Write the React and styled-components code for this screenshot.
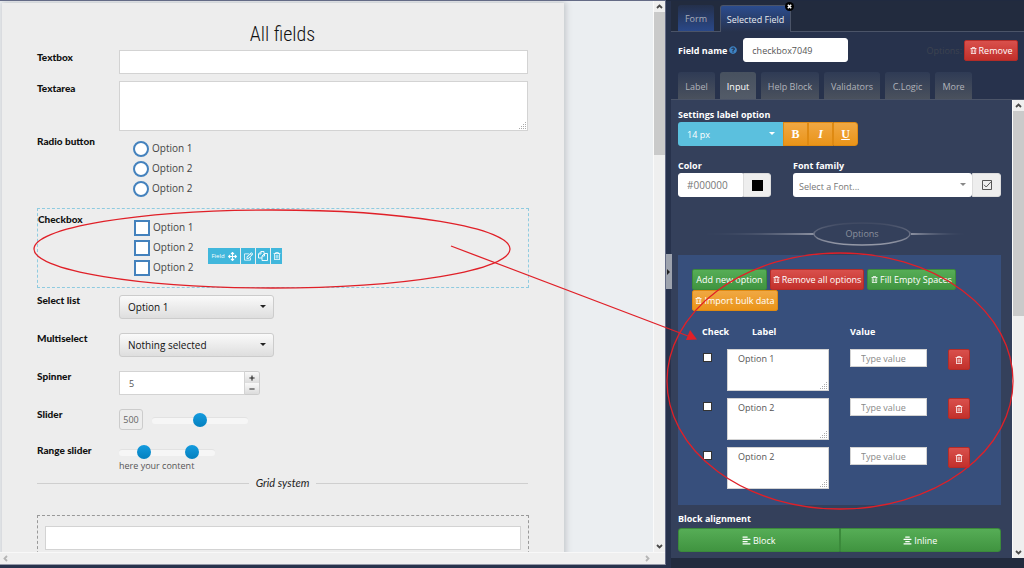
import React from "react";
import styled, { createGlobalStyle, css } from "styled-components";
import {
  FaArrowsAlt,
  FaRegEdit,
  FaRegTrashAlt,
  FaQuestionCircle,
  FaAlignLeft,
  FaAlignCenter,
  FaPlus,
  FaMinus,
} from "react-icons/fa";

const GlobalStyle = createGlobalStyle`
  *, *::before, *::after { box-sizing: border-box; }
  html, body { margin: 0; background: #27324c; }
  body, button, input, select, textarea {
    font-family: "Open Sans", "Noto Sans", sans-serif;
    font-size: 9px;
  }
  button, input, select, textarea { margin: 0; }
`;

/* ---------- shell ---------- */

const Shell = styled.div`
  position: relative;
  display: flex;
  height: 100vh;
  min-height: 568px;
  overflow: hidden;
  background: #27324c;
`;

const Workspace = styled.main`
  flex: 1;
  min-width: 0;
  display: flex;
  flex-direction: column;
  margin-bottom: 3px;
  border-top: 1px solid #646b86;
  border-right: 1px solid #646b86;
  border-bottom: 1px solid #9599a8;
  background: #efefef;
`;

const WorkspaceBody = styled.div`
  flex: 1;
  min-height: 0;
  display: flex;
`;

const Canvas = styled.div`
  flex: 1;
  min-width: 0;
  overflow: hidden;
  padding: 2px 89px 0 2px;
  background: #ebeef1;
`;

const Paper = styled.form`
  height: 600px;
  padding: 17px 36px 0 35px;
  background: #ededed;
  box-shadow: 1px 0 6px 1px #c3c7ca;
`;

const Sidebar = styled.aside`
  flex: 0 0 358px;
  display: flex;
  flex-direction: column;
  padding-left: 5px;
  border-top: 1px solid #202a40;
`;

/* ---------- scroll bars ---------- */

const VBar = styled.div`
  flex: 0 0 12px;
  display: flex;
  flex-direction: column;
  align-items: stretch;
  background: #efefef;
  border-left: 1px solid #fafafa;
`;

const HBar = styled.div`
  flex: 0 0 12px;
  display: flex;
  align-items: center;
  justify-content: space-between;
  padding-right: 12px;
  background: #efefef;
  border-top: 1px solid #f8f8f8;
`;

const Thumb = styled.div`
  flex: 0 0 ${(p) => p.$size};
  background: #cacaca;
`;

const Spacer = styled.div`
  flex: 1;
`;

const ArrowBox = styled.svg`
  display: block;
  width: 11px;
  height: 11px;
  transform: rotate(${(p) => p.$turn || 0}deg);
`;

function ScrollArrow({ turn, color = "#4a4a4a" }) {
  return (
    <ArrowBox $turn={turn} viewBox="0 0 11 11" aria-hidden="true">
      <path d="M3 7 L5.5 4.5 L8 7" fill="none" stroke={color} strokeWidth="1.8" />
    </ArrowBox>
  );
}

/* ---------- form preview ---------- */

const Title = styled.h1`
  margin: 0 0 1px;
  font: 300 20px/29px "Roboto Condensed", Roboto, sans-serif;
  color: #111;
  text-align: center;
`;

const Row = styled.div`
  display: grid;
  grid-template-columns: 82px minmax(0, 1fr);
  align-items: start;
  min-height: ${(p) => p.$h}px;
`;

const FieldLabel = styled.label`
  font: 900 10px/14px Lato, "Open Sans", sans-serif;
  color: #111;
`;

const Control = styled.div`
  display: flex;
  align-items: center;
  padding-top: 2px;
`;

const box = css`
  display: block;
  border: 1px solid #d3d3d3;
  border-radius: 0;
  background: #fff;
  color: #555;
  outline: none;
`;

const TextInput = styled.input`
  ${box}
  width: 100%;
  height: 24px;
`;

const TextArea = styled.textarea`
  ${box}
  width: 100%;
  height: ${(p) => p.$h}px;
  padding: ${(p) => (p.$inset ? "2px 10px" : "2px")};
  line-height: 14px;
  resize: none;
`;

const AreaWrap = styled.div`
  position: relative;
  width: ${(p) => p.$w || "100%"};
`;

const GripSvg = styled.svg`
  position: absolute;
  right: 2px;
  bottom: 2px;
  width: 7px;
  height: 7px;
`;

function Grip() {
  return (
    <GripSvg viewBox="0 0 7 7" fill="#aaa" aria-hidden="true">
      <path d="M6 0h1v1H6zM4 2h1v1H4zM6 2h1v1H6zM2 4h1v1H2zM4 4h1v1H4zM6 4h1v1H6zM0 6h1v1H0zM2 6h1v1H2zM4 6h1v1H4zM6 6h1v1H6z" />
    </GripSvg>
  );
}

const Choices = styled.div`
  padding: ${(p) => p.$top}px 0 0 14px;
`;

const Choice = styled.label`
  display: flex;
  align-items: center;
  gap: 3px;
  height: 20px;
  font-size: 10px;
  line-height: 18px;
  color: #444;
`;

const ChoiceInput = styled.input`
  appearance: none;
  width: 16px;
  height: 16px;
  border: 2px solid #4482bd;
  border-radius: ${(p) => (p.type === "radio" ? "50%" : "0")};
  background: #fff;
`;

const ChoiceText = styled.span`
  padding-bottom: 2px;
`;

const Selected = styled.div`
  position: relative;
  margin: 0 -1px 5px 0;
  height: 80px;
  padding-top: 3px;
  border: 1px dashed #8fcbe0;
`;

const FieldTools = styled.div`
  position: absolute;
  left: 170px;
  top: 39px;
  display: flex;
  gap: 1px;
`;

const Tool = styled.button`
  display: flex;
  align-items: center;
  justify-content: center;
  gap: 3px;
  min-width: ${(p) => p.$w}px;
  height: 16px;
  padding: 0;
  border: 0;
  background: #41b7dc;
  color: #fff;
  font-size: 6px;
`;

const SelectWrap = styled.div`
  position: relative;
  width: ${(p) => p.$w};
`;

const Caret = styled.svg`
  position: absolute;
  right: ${(p) => p.$right || 8}px;
  top: 50%;
  width: 6px;
  height: 3px;
  margin-top: -2px;
  pointer-events: none;
`;

function CaretIcon({ color = "#222", right }) {
  return (
    <Caret viewBox="0 0 6 3" $right={right} aria-hidden="true">
      <path d="M0 0h6L3 3z" fill={color} />
    </Caret>
  );
}

const GreySelect = styled.select`
  appearance: none;
  display: block;
  width: 100%;
  height: 24px;
  padding: 0 8px;
  border: 1px solid #ccc;
  border-radius: 3px;
  background: linear-gradient(#fafafa, #dedede);
  color: #111;
  font-size: 10px;
`;

const SpinInput = styled(TextInput)`
  width: 126px;
  padding: 0 9px;
`;

const SpinButtons = styled.div`
  display: flex;
  flex-direction: column;
  border: 1px solid #ccc;
  border-left: 0;
  border-radius: 0 3px 3px 0;
  overflow: hidden;
`;

const SpinButton = styled.button`
  display: flex;
  align-items: center;
  justify-content: center;
  width: 14px;
  height: 11px;
  padding: 0;
  border: 0;
  background: linear-gradient(#f8f8f8, #dcdcdc);
  color: #222;
`;

const ValueBox = styled.output`
  width: 24px;
  height: 21px;
  margin-right: 9px;
  border: 1px solid #ccc;
  border-radius: 3px;
  font-size: 9px;
  line-height: 19px;
  text-align: center;
  color: #666;
`;

const RangeTrack = styled.div`
  position: relative;
  width: 96px;
  height: 18px;
  &::before {
    content: "";
    position: absolute;
    inset: 6px 0 5px;
    border-radius: 3px;
    border-top: 1px solid #e2e2e2;
    background: #f6f6f6;
  }
`;

const Range = styled.input`
  appearance: none;
  position: absolute;
  inset: 2px 0 auto;
  width: 100%;
  height: 14px;
  background: transparent;
  pointer-events: none;
  &::-webkit-slider-thumb {
    appearance: none;
    width: 14px;
    height: 14px;
    border-radius: 50%;
    background: linear-gradient(#149bdf, #0480be);
    pointer-events: auto;
  }
`;

const Note = styled.p`
  margin: 0 0 4px 82px;
  font-size: 9px;
  line-height: 10px;
  color: #555;
`;

const GridHeading = styled.div`
  display: flex;
  align-items: center;
  gap: 7px;
  height: 16px;
  margin-bottom: 24px;
  font: italic 400 11px/16px Lato, sans-serif;
  color: #222;
  &::before, &::after {
    content: "";
    flex: 1;
    height: 1px;
    background: #cfcfcf;
  }
`;

const GridBox = styled.div`
  margin-right: -1px;
  padding: 10px 7px;
  height: 60px;
  border: 1px dashed #999;
`;

/* ---------- settings sidebar ---------- */

const TopTabs = styled.nav`
  display: flex;
  align-items: flex-end;
  gap: 6px;
  height: 31px;
  padding: 0 7px;
  border-bottom: 1px solid #4b5468;
  background: #222b3e;
`;

const TopTab = styled.button`
  position: relative;
  min-width: ${(p) => p.$w}px;
  height: ${(p) => (p.$on ? 27 : 26)}px;
  padding: 1px 0 0;
  margin-bottom: ${(p) => (p.$on ? -1 : 0)}px;
  border: ${(p) => (p.$on ? "1px solid #4b5468" : "0")};
  border-bottom: 0;
  border-radius: 3px 3px 0 0;
  background: ${(p) =>
    p.$on ? "linear-gradient(#2b4c8e, #27324c)" : "linear-gradient(#24304b, #2a4888)"};
  color: ${(p) => (p.$on ? "#e8eaf0" : "#a9adb8")};
  font-size: 9px;
`;

const CloseBadge = styled.span`
  position: absolute;
  top: -4px;
  right: -4px;
  width: 9px;
  height: 9px;
  border-radius: 50%;
  background: #000;
  svg { display: block; }
`;

const NameRow = styled.div`
  display: flex;
  align-items: center;
  padding: 0 6px 0 7px;
  height: 36px;
  gap: 6px;
`;

const SideLabel = styled.label`
  display: flex;
  align-items: center;
  gap: 2px;
  font-size: 9px;
  font-weight: 700;
  line-height: 15px;
  color: #fff;
  white-space: nowrap;
`;

const NameInput = styled.input`
  ${box}
  width: 105px;
  height: 24px;
  padding: 0 8px;
  border-color: #fff;
  border-radius: 3px;
`;

const DimText = styled.span`
  margin-left: auto;
  margin-right: -4px;
  color: #3d4350;
`;

const tones = {
  green: ["#56ad56", "#409440", "#3b8a3b"],
  red: ["#d9504c", "#c2302b", "#b32c28"],
  orange: ["#f0a843", "#ea9419", "#df8a12"],
};

const Button = styled.button`
  display: flex;
  align-items: center;
  justify-content: center;
  gap: 2px;
  flex: ${(p) => (p.$grow ? "1" : "none")};
  height: ${(p) => (p.$tall ? 24 : 21)}px;
  min-width: ${(p) => p.$w || 0}px;
  padding: 0;
  border: 1px solid ${(p) => tones[p.$tone][2]};
  border-radius: ${(p) => p.$radius || "2px"};
  background: linear-gradient(${(p) => tones[p.$tone][0]}, ${(p) => tones[p.$tone][1]});
  color: #fff;
  font-size: 9px;
  white-space: nowrap;
`;

const StyleGlyph = styled.span`
  font: ${(p) => p.$face} 12px/14px "Liberation Serif", serif;
  text-decoration: ${(p) => (p.$under ? "underline" : "none")};
`;

const SubTabs = styled.nav`
  display: flex;
  align-items: flex-end;
  gap: 5px;
  height: 32px;
  padding: 0 7px;
  border-bottom: 1px solid #4b5468;
`;

const SubTab = styled.button`
  height: 27px;
  min-width: ${(p) => p.$w}px;
  padding: 2px 0 0;
  border: 0;
  border-radius: 3px 3px 0 0;
  background: linear-gradient(${(p) => (p.$on ? "#47515f, #535b68" : "#2f3b55, #4a515d")});
  color: ${(p) => (p.$on ? "#fff" : "#b0b3bb")};
  font-size: 9px;
`;

const SettingsBody = styled.div`
  flex: 1;
  min-height: 0;
  display: flex;
  border-bottom: 10px solid #222b3e;
`;

const Settings = styled.div`
  flex: 1;
  min-width: 0;
  overflow: hidden;
  padding: 7px 11px 0 7px;
  background: #34405b;
`;

const Inline = styled.div`
  display: flex;
`;

const BlueSelect = styled.select`
  appearance: none;
  display: block;
  width: 100%;
  height: 24px;
  padding: 0 9px;
  border: 0;
  border-radius: 3px 0 0 3px;
  background: #5bc0de;
  color: #fff;
  font-size: 9px;
`;

const FontSelect = styled(BlueSelect)`
  padding: 2px 6px 0;
  border-radius: 3px;
  background: #fff;
  color: #777;
`;

const ColorGroup = styled.div`
  width: 115px;
`;

const FontGroup = styled.div`
  flex: 1;
`;

const TwoGroups = styled.div`
  display: flex;
  margin-top: 12px;
`;

const HexInput = styled.input`
  ${box}
  width: 65px;
  height: 24px;
  padding: 0 8px;
  border-color: #fff;
  border-radius: 3px 0 0 3px;
  color: #777;
  font-size: 10px;
`;

const Addon = styled.button`
  display: flex;
  align-items: center;
  justify-content: center;
  width: ${(p) => p.$w}px;
  height: 24px;
  padding: 0;
  border: 1px solid #ddd;
  border-radius: 0 3px 3px 0;
  background: #eee;
`;

const Swatch = styled.span`
  width: 11px;
  height: 11px;
  background: #000;
`;

const Divider = styled.svg`
  display: block;
  width: 100%;
  height: 28px;
  margin: 23px 0 7px;
`;

const OptionsCard = styled.section`
  height: 250px;
  padding: 14px;
  background: #374f7c;
`;

const ButtonWrap = styled.div`
  display: flex;
  flex-wrap: wrap;
  column-gap: 3px;
`;

const OptionTable = styled.table`
  width: 100%;
  margin-top: 11px;
  table-layout: fixed;
  border-collapse: collapse;
  td { height: 49px; padding: 0; vertical-align: top; }
`;

const Head = styled.th`
  width: ${(p) => p.$w};
  height: 27px;
  padding: 3px 0 0 ${(p) => p.$pad || 0}px;
  font-size: 9px;
  line-height: 14px;
  text-align: left;
  vertical-align: top;
  color: #fff;
`;

const RowCheck = styled.input`
  appearance: none;
  display: block;
  width: 9px;
  height: 9px;
  margin: 4px 0 0 11px;
  border: 1px solid #333;
  background: #fff;
`;

const ValueInput = styled.input`
  ${box}
  width: 77px;
  height: 18px;
  padding: 0 10px;
  &::placeholder { color: #8a8a8a; }
`;

const AlignLabel = styled.div`
  padding: 6px 0 2px;
`;

const Handle = styled.button`
  position: absolute;
  top: 254px;
  right: 352px;
  width: 6px;
  height: 35px;
  padding: 0;
  border: 0;
  background: #9ea3ae;
  svg { display: block; }
`;

const Annotations = styled.svg`
  position: absolute;
  inset: 0;
  width: 1024px;
  height: 568px;
  pointer-events: none;
`;

/* ---------- icons ---------- */

const CopyIcon = () => (
  <svg width="10" height="10" viewBox="0 0 20 20" fill="none" stroke="currentColor" strokeWidth="1.8" aria-hidden="true">
    <path d="M8 14H1V6l5-5h6v4M1 6h5V1M8 10l5-5h6v14H8zM8 10h5V5" />
  </svg>
);

const CheckSquare = () => (
  <svg width="10" height="10" viewBox="0 0 10 10" fill="none" stroke="#444" strokeWidth=".9" aria-hidden="true">
    <path d="M.5.5h9v9h-9z" />
    <path d="M2 4.8 4.2 7 9 1.8" />
  </svg>
);

const previewOptions = ["Option 1", "Option 2", "Option 2"];

function ChoiceList({ type, top }) {
  return (
    <Choices $top={top}>
      {previewOptions.map((text, i) => (
        <Choice key={i}>
          <ChoiceInput type={type} name={`${type}-preview`} />
          <ChoiceText>{text}</ChoiceText>
        </Choice>
      ))}
    </Choices>
  );
}

function FormPreview() {
  return (
    <Paper>
      <Title>All fields</Title>
      <Row $h={31}>
        <FieldLabel htmlFor="f-text">Textbox</FieldLabel>
        <TextInput id="f-text" />
      </Row>
      <Row $h={53}>
        <FieldLabel htmlFor="f-area">Textarea</FieldLabel>
        <AreaWrap>
          <TextArea id="f-area" $h={50} />
          <Grip />
        </AreaWrap>
      </Row>
      <Row $h={74}>
        <FieldLabel as="span">Radio button</FieldLabel>
        <ChoiceList type="radio" top={5} />
      </Row>
      <Selected>
        <Row>
          <FieldLabel as="span">Checkbox</FieldLabel>
          <ChoiceList type="checkbox" top={6} />
        </Row>
        <FieldTools>
          <Tool type="button" $w={32}>
            Field <FaArrowsAlt size={9} />
          </Tool>
          <Tool type="button" $w={14} aria-label="Edit"><FaRegEdit size={9} /></Tool>
          <Tool type="button" $w={14} aria-label="Copy"><CopyIcon /></Tool>
          <Tool type="button" $w={11} aria-label="Delete"><FaRegTrashAlt size={8} /></Tool>
        </FieldTools>
      </Selected>
      <Row $h={38}>
        <FieldLabel htmlFor="f-select">Select list</FieldLabel>
        <Control>
          <SelectWrap $w="155px">
            <GreySelect id="f-select"><option>Option 1</option></GreySelect>
            <CaretIcon />
          </SelectWrap>
        </Control>
      </Row>
      <Row $h={38}>
        <FieldLabel htmlFor="f-multi">Multiselect</FieldLabel>
        <Control>
          <SelectWrap $w="155px">
            <GreySelect id="f-multi"><option>Nothing selected</option></GreySelect>
            <CaretIcon />
          </SelectWrap>
        </Control>
      </Row>
      <Row $h={38}>
        <FieldLabel htmlFor="f-spin">Spinner</FieldLabel>
        <Control>
          <SpinInput id="f-spin" defaultValue="5" />
          <SpinButtons>
            <SpinButton type="button" aria-label="Increase"><FaPlus size={6} /></SpinButton>
            <SpinButton type="button" aria-label="Decrease"><FaMinus size={6} /></SpinButton>
          </SpinButtons>
        </Control>
      </Row>
      <Row $h={36}>
        <FieldLabel htmlFor="f-slider">Slider</FieldLabel>
        <Control>
          <ValueBox htmlFor="f-slider">500</ValueBox>
          <RangeTrack>
            <Range id="f-slider" type="range" max="1000" defaultValue="500" />
          </RangeTrack>
        </Control>
      </Row>
      <Row $h={18}>
        <FieldLabel htmlFor="f-range">Range slider</FieldLabel>
        <RangeTrack>
          <Range id="f-range" type="range" defaultValue="22" />
          <Range aria-label="Range end" type="range" defaultValue="80" />
        </RangeTrack>
      </Row>
      <Note>here your content</Note>
      <GridHeading>Grid system</GridHeading>
      <GridBox>
        <TextInput aria-label="Grid field" />
      </GridBox>
    </Paper>
  );
}

function OptionsEditor() {
  return (
    <OptionsCard>
      <ButtonWrap>
        <Button $tone="green" $w={75}>Add new option</Button>
        <Button $tone="red" $w={94}><FaRegTrashAlt size={7} />Remove all options</Button>
        <Button $tone="green" $w={89}><FaRegTrashAlt size={7} />Fill Empty Spaces</Button>
        <Button $tone="orange" $w={86}><FaRegTrashAlt size={7} />Import bulk data</Button>
      </ButtonWrap>
      <OptionTable>
        <thead>
          <tr>
            <Head $w="35px" $pad={10}>Check</Head>
            <Head $w="123px" $pad={25}>Label</Head>
            <Head $w="98px">Value</Head>
            <Head aria-label="Delete" />
          </tr>
        </thead>
        <tbody>
          {previewOptions.map((text, i) => (
            <tr key={i}>
              <td><RowCheck type="checkbox" aria-label={`Check ${i + 1}`} /></td>
              <td>
                <AreaWrap $w="102px">
                  <TextArea $h={42} $inset defaultValue={text} aria-label={`Label ${i + 1}`} />
                  <Grip />
                </AreaWrap>
              </td>
              <td><ValueInput placeholder="Type value" aria-label={`Value ${i + 1}`} /></td>
              <td><Button $tone="red" $w={22} aria-label="Delete option"><FaRegTrashAlt size={8} /></Button></td>
            </tr>
          ))}
        </tbody>
      </OptionTable>
    </OptionsCard>
  );
}

function SettingsPanel() {
  return (
    <Sidebar>
      <TopTabs>
        <TopTab $w={36}>Form</TopTab>
        <TopTab $w={71} $on>
          Selected Field
          <CloseBadge>
            <svg width="9" height="9" viewBox="0 0 9 9" aria-hidden="true">
              <path d="M2.8 2.8l3.4 3.4M6.2 2.8L2.8 6.2" stroke="#fff" strokeWidth="1.6" />
            </svg>
          </CloseBadge>
        </TopTab>
      </TopTabs>
      <NameRow>
        <SideLabel htmlFor="s-name">
          Field name <FaQuestionCircle size={8} color="#3d83c4" />
        </SideLabel>
        <NameInput id="s-name" defaultValue="checkbox7049" />
        <DimText>Options:</DimText>
        <Button $tone="red" $w={54}><FaRegTrashAlt size={7} />Remove</Button>
      </NameRow>
      <SubTabs>
        <SubTab $w={37}>Label</SubTab>
        <SubTab $w={36} $on>Input</SubTab>
        <SubTab $w={58}>Help Block</SubTab>
        <SubTab $w={56}>Validators</SubTab>
        <SubTab $w={45}>C.Logic</SubTab>
        <SubTab $w={37}>More</SubTab>
      </SubTabs>
      <SettingsBody>
        <Settings>
          <SideLabel htmlFor="s-size">Settings label option</SideLabel>
          <Inline>
            <SelectWrap $w="105px">
              <BlueSelect id="s-size"><option>14 px</option></BlueSelect>
              <CaretIcon color="#fff" />
            </SelectWrap>
            <Button $tone="orange" $tall $w={25} $radius="0"><StyleGlyph $face="bold">B</StyleGlyph></Button>
            <Button $tone="orange" $tall $w={25} $radius="0"><StyleGlyph $face="italic bold">I</StyleGlyph></Button>
            <Button $tone="orange" $tall $w={25} $radius="0 3px 3px 0"><StyleGlyph $face="bold" $under>U</StyleGlyph></Button>
          </Inline>
          <TwoGroups>
            <ColorGroup>
              <SideLabel htmlFor="s-color">Color</SideLabel>
              <Inline>
                <HexInput id="s-color" defaultValue="#000000" />
                <Addon $w={28} aria-label="Pick colour"><Swatch /></Addon>
              </Inline>
            </ColorGroup>
            <FontGroup>
              <SideLabel htmlFor="s-font">Font family</SideLabel>
              <Inline>
                <SelectWrap $w="calc(100% - 29px)">
                  <FontSelect id="s-font"><option>Select a Font...</option></FontSelect>
                  <CaretIcon color="#888" right={6} />
                </SelectWrap>
                <Addon $w={29} aria-label="Apply font"><CheckSquare /></Addon>
              </Inline>
            </FontGroup>
          </TwoGroups>
          <Divider viewBox="0 0 323 28" preserveAspectRatio="xMidYMid meet" aria-label="Options">
            <defs>
              <linearGradient id="fadeL"><stop offset="0" stopColor="#8b90a0" stopOpacity="0" /><stop offset="1" stopColor="#8b90a0" /></linearGradient>
              <linearGradient id="fadeR"><stop offset="0" stopColor="#8b90a0" /><stop offset="1" stopColor="#8b90a0" stopOpacity="0" /></linearGradient>
              <linearGradient id="rim" x2="0" y2="1"><stop offset="0" stopColor="#3f4962" /><stop offset="1" stopColor="#969aa8" /></linearGradient>
            </defs>
            <path d="M20 14L136 13v2z" fill="url(#fadeL)" />
            <path d="M233 13L290 14L233 15z" fill="url(#fadeR)" />
            <ellipse cx="184" cy="14" rx="48" ry="11" fill="#34405b" stroke="url(#rim)" strokeWidth="1.5" />
            <text x="184" y="17" textAnchor="middle" fontSize="9" fill="#8b909d">Options</text>
          </Divider>
          <OptionsEditor />
          <AlignLabel><SideLabel as="div">Block alignment</SideLabel></AlignLabel>
          <Inline>
            <Button $tone="green" $tall $grow $radius="3px 0 0 3px"><FaAlignLeft size={9} />Block</Button>
            <Button $tone="green" $tall $grow $radius="0 3px 3px 0"><FaAlignCenter size={9} />Inline</Button>
          </Inline>
        </Settings>
        <VBar>
          <ScrollArrow />
          <Thumb $size="205px" />
          <Spacer />
          <ScrollArrow turn={180} />
        </VBar>
      </SettingsBody>
    </Sidebar>
  );
}

export default function App() {
  return (
    <>
      <GlobalStyle />
      <Shell>
        <Workspace>
          <WorkspaceBody>
            <Canvas><FormPreview /></Canvas>
            <VBar>
              <ScrollArrow />
              <Thumb $size="143px" />
              <Spacer />
              <ScrollArrow turn={180} />
            </VBar>
          </WorkspaceBody>
          <HBar>
            <ScrollArrow turn={-90} color="#b5b5b5" />
            <ScrollArrow turn={90} color="#b5b5b5" />
          </HBar>
        </Workspace>
        <SettingsPanel />
        <Handle aria-label="Toggle panel">
          <svg width="6" height="35" viewBox="0 0 6 35" aria-hidden="true">
            <path d="M1 15l3 3-3 3z" fill="#222" />
          </svg>
        </Handle>
        <Annotations viewBox="0 0 1024 568" fill="none" stroke="#e02028" strokeWidth="1.3" aria-hidden="true">
          <ellipse cx="272" cy="249" rx="238" ry="39" />
          <ellipse cx="840" cy="381" rx="173" ry="128" />
          <path d="M451 246L688 336" />
          <path d="M697 339.500l-11 .5 4-10z" fill="#e02028" stroke="none" />
        </Annotations>
      </Shell>
    </>
  );
}
